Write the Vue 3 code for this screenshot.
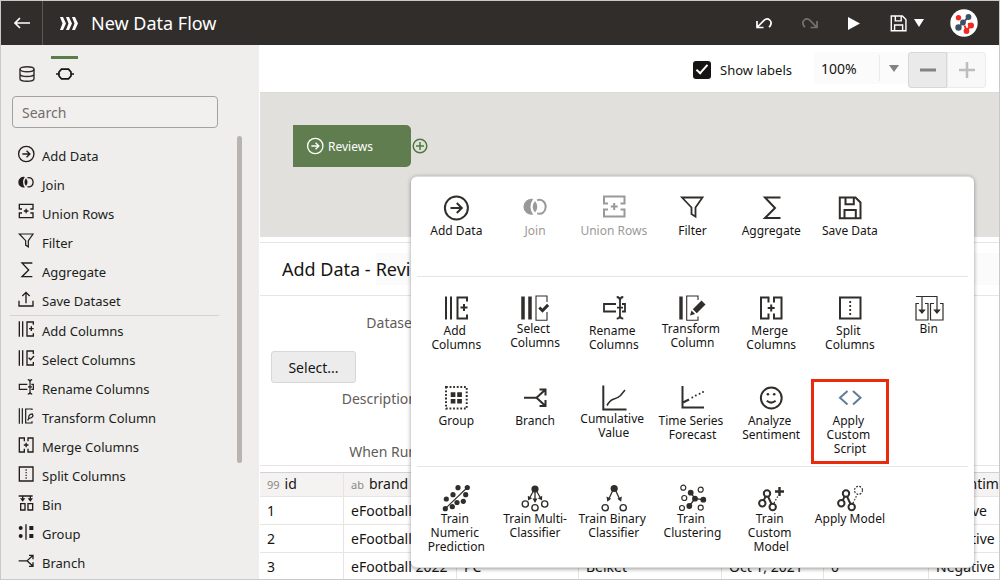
<script setup>
import { ref } from 'vue'

const search = ref('')
const showLabels = ref(true)
const stepName = ref('Reviews')

const trio = '<g fill="none" stroke="currentColor" stroke-width="2"><circle cx="8" cy="7.5" r="3.2"/><circle cx="3.3" cy="17.3" r="3.2"/><circle cx="13.7" cy="21" r="3.2"/><path d="M6.6 10.5 4.7 14.4M9.1 10.6l3.4 7.4"/></g>'
const line = (d, w = 2) => `<path fill="none" stroke="currentColor" stroke-width="${w}" d="${d}"/>`
const dots = (points, r) => points.map(([x, y]) => `<circle cx="${x}" cy="${y}" r="${r}" fill="currentColor"/>`).join('')
const rings = (points, r, w = 1.4) => points.map(([x, y]) => `<circle cx="${x}" cy="${y}" r="${r}" fill="none" stroke="currentColor" stroke-width="${w}"/>`).join('')

const icons = {
  add: rings([[12.4, 12]], 11.5, 2) + line('M6.5 12H17.5M12.8 7l5 5-5 5'),
  join: '<path fill="currentColor" d="M10.2 3A8 8 0 1 0 10.2 18.6Q4.8 10.8 10.2 3zM12 5Q16.6 10.8 12 16.6 7.4 10.8 12 5z"/>' + line('M14.2 4.200C19 2.800 22.700 6 22.700 10.800S19 18.800 14.200 17.400', 2),
  union: line('M6 7.5H2V.5h20.5v7h-4M6 13.5H2v7h20.5v-7h-4M12.2 7v7M8.7 10.5h7'),
  filter: line('M2 1.5h20.5L15.5 11.5v9.2l-4-2.6v-6.6z', 1.8),
  aggregate: line('M21.5 1.5H6L16 12 6 22h15.5'),
  save: line('M1.8 1.5h15.7l5 5v15.8H1.8zM7.5 2v6.3h8.3V2M6.5 22v-8h11.3v8'),
  addColumns: line('M2 .5v23M7 .5v23M23 5.5V1.5H13.5v21H23v-4M20 8v7M16.5 11.5h7'),
  selectColumns: line('M0 .5v23M7 .5v23', 3.5) + line('M24 6V0H13v24.3h11V16', 1.1) + line('M16.3 11.5l3.2 3.2 5.6-5.8', 3),
  rename: line('M14 8H2v7.5h12M20 8h3v7.5h-3M14.7 1q3.3.2 3.3 3.2v15.2q0 3-3.3 3.2M21.3 1Q18 1.2 18 4.2M18 19.4q0 3 3.3 3.2M15 11.7h6', 1.8),
  transform: line('M1 .5v23', 3.4) + line('M18 4V0H6.7V24.3H18V20.5', 1.1) + '<path fill="currentColor" d="M10 19.6l1.5-5 3.6 3.5zM12.8 13.3l8.7-8.8 4 4-8.7 8.8z"/>',
  merge: line('M9.5 6.5V1.5H2v21h7.5v-5M15 6.5V1.5h7.5v21H15v-5M12.2 8.5v7M8.7 12h7'),
  split: line('M2 1.5h20.5v21H2z') + '<path fill="none" stroke="currentColor" stroke-width="1.8" stroke-dasharray="2 2" d="M12.2 5v15"/>',
  bin: line('M-1 .5h21.5M5 .5v15M20 .5v15M2 7.5h-3v16.5h12V7.5H8M17 7.5h-3.5v16.5H26V7.5h-3', 1.2) + '<path fill="currentColor" d="M1.2 13.5h7.6L5 18zM16.2 13.5h7.6L20 18z"/>',
  group: '<rect x="2" y="1" width="20.7" height="21.5" fill="none" stroke="currentColor" stroke-width="2" stroke-dasharray="1.8 1.8"/><path fill="currentColor" d="M6.7 6.3h4.7v4.6H6.7zM13.2 6.3h4.7v4.6h-4.7zM6.7 12.9h4.7v4.6H6.7zM13.2 12.9h4.7v4.6h-4.7z"/>',
  branch: line('M1 11.8h12.5L22.5 3.5M13.5 11.8l9 8.2M16.5 3.5h6v6M16.5 20h6v-6'),
  cumulative: line('M1.3-.5V23.5H24.5') + line('M5 19.5Q8 14 12 13T18.5 9.5L23 4', 1.6),
  timeSeries: line('M2.5 0V21.6H24') + line('M3 16.5l6-3') + dots([[12.3, 11.5], [15.8, 9.6], [19.6, 7.8], [23, 6]], 1),
  sentiment: rings([[12.3, 12]], 10.4, 2) + dots([[8.9, 8.3], [15.2, 8.3]], 1.3) + line('M7.8 14.8q4.4 3.6 8.8 0'),
  code: line('M9.5 5 2 11.8l7.5 6.7M15 5l7.5 6.8-7.5 6.7'),
  numeric: dots([[14, 1.7], [23.3, 1.5], [9, 8.7], [21.7, 8.7], [2.3, 13], [13, 16.5], [19.3, 15.3], [1.3, 22.7], [8.3, 20.7]], 2.6) + line('M1.3 22.7 23.3 1.5', 1.1),
  multi: dots([[12, 3]], 3.6) + rings([[2.3, 18], [12, 21.7], [21.7, 18]], 3.1) + line('M10.5 5l-4 7M12 5v9M13.5 5l4 7', 1.3) + '<path fill="currentColor" d="M4.8 9.8l4.4 2.4L5 14.6zM9.5 12.5h5L12 17zM19.2 9.8l-4.4 2.4L19 14.6z"/>',
  binary: dots([[12.2, 2.5]], 3.6) + rings([[3.2, 21.7], [21.2, 21.7]], 3.1) + line('M11 4 6.8 13M13.4 4l4.2 9', 1.3) + '<path fill="currentColor" d="M4.5 10.5l4.6 2.2-3.8 3zM19.9 10.5l-4.6 2.2 3.8 3z"/>',
  clustering: rings([[3.3, 1.7], [20.7, 3.7], [4.3, 12], [2, 22], [20.7, 21.7]], 2.5, 1.2) + dots([[10.7, 6.7], [15, 12.7], [23.3, 13.7], [9.3, 20]], 2.9) + line('M10.7 6.7l4.3 6 8.3 1M15 12.7 9.3 20', 1.3),
  customModel: trio + line('M20.5 1v9M16 5.5h9', 2.4) + '<path fill="none" stroke="currentColor" stroke-width="1.2" stroke-dasharray="1.5 1.5" d="M15 17l4-7"/>',
  applyModel: trio + '<circle cx="20.5" cy="4.3" r="4" fill="none" stroke="currentColor" stroke-width="1.2" stroke-dasharray="1.8 1.4"/><path fill="none" stroke="currentColor" stroke-width="1.2" stroke-dasharray="1.5 1.5" d="M15 17l4-8"/>',
  upload: line('M1.5 14.5v8h21v-8M12 18.5V2M6.5 7.5 12 2l5.5 5.5'),
  selectSmall: line('M2 .5v23M7 .5v23M23 6V1.5H13.5v21H23V18M16 11.5l3 3 5-5.5'),
  transformSmall: line('M2 .5v23M6.5 .5v23M21 3V1.5H11.5v21H21V20M16 16l-1.5 2.5M16 15.5q-.5-4 2.5-6l3-.5 1 3q-2 4-6.5 3.5z', 1.8),
  binSmall: line('M1 1.5h21M7 1.5v6M18.5 1.5v6M4 13h6.5v9.5H4zM15 13h7v9.5h-7z') + '<path fill="currentColor" d="M3 5h8l-4 5zM14.5 5h8l-4 5z"/>',
  groupSmall: dots([[4, 6], [4, 18]], 3) + line('M12 .5v23') + '<path fill="currentColor" d="M17 3h6v6h-6zM17 15h6v6h-6z"/>'
}

const sidebarGroups = [
  [
    ['add', 'Add Data'], ['join', 'Join'], ['union', 'Union Rows'],
    ['filter', 'Filter'], ['aggregate', 'Aggregate'], ['upload', 'Save Dataset']
  ],
  [
    ['addColumns', 'Add Columns'], ['selectSmall', 'Select Columns'], ['rename', 'Rename Columns'],
    ['transformSmall', 'Transform Column'], ['merge', 'Merge Columns'], ['split', 'Split Columns'],
    ['binSmall', 'Bin'], ['groupSmall', 'Group'], ['branch', 'Branch']
  ]
]

const menuSections = [
  [
    { icon: 'add', label: 'Add Data' },
    { icon: 'join', label: 'Join', disabled: true },
    { icon: 'union', label: 'Union Rows', disabled: true },
    { icon: 'filter', label: 'Filter' },
    { icon: 'aggregate', label: 'Aggregate' },
    { icon: 'save', label: 'Save Data' }
  ],
  [
    { icon: 'addColumns', label: 'Add \nColumns' },
    { icon: 'selectColumns', label: 'Select \nColumns', tight: true },
    { icon: 'rename', label: 'Rename \nColumns' },
    { icon: 'transform', label: 'Transform \nColumn', tight: true },
    { icon: 'merge', label: 'Merge \nColumns' },
    { icon: 'split', label: 'Split \nColumns' },
    { icon: 'bin', label: 'Bin', tight: true },
    { icon: 'group', label: 'Group' },
    { icon: 'branch', label: 'Branch' },
    { icon: 'cumulative', label: 'Cumulative \nValue', tight: true },
    { icon: 'timeSeries', label: 'Time Series \nForecast' },
    { icon: 'sentiment', label: 'Analyze \nSentiment' },
    { icon: 'code', label: 'Apply \nCustom \nScript', marked: true }
  ],
  [
    { icon: 'numeric', label: 'Train \nNumeric \nPrediction', tight: true },
    { icon: 'multi', label: 'Train Multi-\nClassifier', tight: true },
    { icon: 'binary', label: 'Train Binary \nClassifier', tight: true },
    { icon: 'clustering', label: 'Train \nClustering', tight: true },
    { icon: 'customModel', label: 'Train \nCustom \nModel', tight: true },
    { icon: 'applyModel', label: 'Apply Model', tight: true }
  ]
]

const columns = [
  { type: '99', name: 'id' },
  { type: 'ab', name: 'brand' },
  { type: '', name: '' },
  { type: '', name: '' },
  { type: '', name: '' },
  { type: '', name: '' },
  { type: 'ab', name: 'sentiment' }
]
const rows = [
  ['1', 'eFootball 2022', 'PC', 'Belket', 'Oct 1, 2021', '0', 'Positive'],
  ['2', 'eFootball 2022', 'PC', 'Belket', 'Oct 1, 2021', '0', 'Negative'],
  ['3', 'eFootball 2022', 'PC', 'Belket', 'Oct 1, 2021', '0', 'Negative']
]
</script>

<template>
  <div class="app">
    <header class="topbar">
      <button class="back" aria-label="Back">
        <svg width="16" height="12" viewBox="0 0 16 12"><path d="M16 6H1M6 1 1 6l5 5" fill="none" stroke="currentColor" stroke-width="1.7" /></svg>
      </button>
      <svg class="flow-mark" width="18" height="13" viewBox="0 0 18 13" fill="currentColor">
        <path d="M0 0h3l3 6.500-3 6.500H0l2.500-6.500zM6 0h3l3 6.500-3 6.500H6l2.500-6.500zM12 0h3l3 6.500-3 6.500H12l2.500-6.500z" />
      </svg>
      <h1>New Data Flow</h1>
      <div class="actions">
        <button aria-label="Undo">
          <svg width="16" height="12" viewBox="0 0 16 12"><path d="M1 4v6.500h6.500M1.500 10 8 3.300Q11 .5 13.700 3t.3 6.200l-1 1" fill="none" stroke="currentColor" stroke-width="1.700" /></svg>
        </button>
        <button aria-label="Redo" class="faded">
          <svg width="16" height="12" viewBox="0 0 16 12"><path d="M15 4v6.500H8.500M14.500 10 8 3.300Q5 .5 2.300 3T2 9.200l1 1" fill="none" stroke="currentColor" stroke-width="1.700" /></svg>
        </button>
        <button aria-label="Run">
          <svg width="12" height="13" viewBox="0 0 12 13"><path d="M0 0l12 6.500L0 13z" fill="currentColor" /></svg>
        </button>
        <button aria-label="Save" class="save">
          <svg width="17" height="17" viewBox="0 0 24 24" v-html="icons.save"></svg>
          <svg width="10" height="8" viewBox="0 0 10 8"><path d="M0 0h10L5 8z" fill="currentColor" /></svg>
        </button>
        <svg class="brand" width="28" height="28" viewBox="0 0 28 28">
          <circle cx="14" cy="14" r="13.700" fill="#fff" />
          <path d="M8.500 18.500 13 13.500 18.500 8M8.500 18.500" fill="none" stroke="#3b5264" stroke-width="1.800" />
          <path d="M14.500 16.500 16.500 21.500l4.500-5-3-2" fill="none" stroke="#f5281f" stroke-width="2" />
          <g fill="#3b5264"><circle cx="18.500" cy="8" r="2.900" /><circle cx="13" cy="13.500" r="2.900" /><circle cx="8.500" cy="18.500" r="3.200" /></g>
          <g fill="#f5281f"><circle cx="8.500" cy="8.800" r="2.700" /><circle cx="21" cy="16.500" r="3" /><circle cx="16.500" cy="22" r="2.900" /></g>
        </svg>
      </div>
    </header>

    <div class="body">
      <aside class="sidebar">
        <div class="tabs">
          <button class="tab" aria-label="Data">
            <svg width="16" height="16" viewBox="0 0 16 16" fill="none" stroke="currentColor" stroke-width="1.400"><ellipse cx="8" cy="3.300" rx="7" ry="2.500" /><path d="M1 3.300v9.400c0 1.400 3.100 2.500 7 2.500s7-1.100 7-2.500V3.300M1 8C1 9.400 4.100 10.500 8 10.500S15 9.400 15 8" /></svg>
          </button>
          <button class="tab active" aria-label="Steps">
            <svg width="18" height="12" viewBox="0 0 18 12" fill="none" stroke="currentColor" stroke-width="1.700"><path d="M5.500 1.200h7L15 4v4l-2.500 2.800h-7L3 8V4zM0 6h3M15 6h3" /></svg>
          </button>
        </div>
        <input v-model="search" class="search" type="text" placeholder="Search" aria-label="Search" />
        <div class="steps">
          <div class="step-list">
            <ul v-for="(group, g) in sidebarGroups" :key="g">
              <li v-for="[icon, label] in group" :key="label">
                <button>
                  <svg width="16" height="16" viewBox="0 0 24 24" v-html="icons[icon]"></svg>
                  <span>{{ label }}</span>
                </button>
              </li>
            </ul>
          </div>
          <div class="thumb"></div>
        </div>
      </aside>

      <main>
        <div class="toolbar">
          <label class="check">
            <input v-model="showLabels" type="checkbox" />
            <span>Show labels</span>
          </label>
          <div class="zoom">
            <select aria-label="Zoom level"><option>100%</option></select>
            <svg width="10" height="7" viewBox="0 0 10 7"><path d="M0 0h10L5 7z" fill="#85817d" /></svg>
          </div>
          <button class="scale" aria-label="Zoom out">
            <svg width="16" height="16" viewBox="0 0 16 16"><path d="M0 8h16" stroke="currentColor" stroke-width="3" /></svg>
          </button>
          <button class="scale light" aria-label="Zoom in">
            <svg width="16" height="16" viewBox="0 0 16 16"><path d="M0 8h16M8 0v16" stroke="currentColor" stroke-width="2.500" /></svg>
          </button>
        </div>

        <section class="canvas">
          <button class="node">
            <svg width="16" height="16" viewBox="0 0 24 24" v-html="icons.add"></svg>
            Reviews
          </button>
          <button class="node-add" aria-label="Add step">
            <svg width="16" height="16" viewBox="0 0 16 16" fill="none" stroke="currentColor" stroke-width="1.500"><circle cx="8" cy="8" r="6.800" /><path d="M8 4v8M4 8h8" /></svg>
          </button>

          <div class="menu">
            <div v-for="(section, s) in menuSections" :key="s" class="menu-section">
              <button
                v-for="item in section"
                :key="item.label"
                class="menu-item"
                :class="{ tight: item.tight, marked: item.marked }"
                :disabled="item.disabled"
              >
                <svg width="24" height="24" viewBox="0 0 24 24" v-html="icons[item.icon]"></svg>
                <span>{{ item.label }}</span>
              </button>
            </div>
          </div>
        </section>

        <section class="detail">
          <div class="detail-title">
            <label for="step-name">Add Data -</label>
            <input id="step-name" v-model="stepName" type="text" />
          </div>
          <div class="form">
            <span class="field">Dataset</span>
            <button class="select">Select...</button>
            <span class="field">Description</span>
            <span class="field last">When Run</span>
          </div>
        </section>

        <table>
          <colgroup>
            <col class="c-id" /><col class="c-brand" /><col class="c-platform" /><col class="c-author" />
            <col class="c-date" /><col class="c-count" /><col />
          </colgroup>
          <thead>
            <tr>
              <th v-for="(column, c) in columns" :key="c"><small>{{ column.type }}</small>{{ column.name }}</th>
            </tr>
          </thead>
          <tbody>
            <tr v-for="row in rows" :key="row[0]">
              <td v-for="(cell, c) in row" :key="c">{{ cell }}</td>
            </tr>
          </tbody>
        </table>
      </main>
    </div>
  </div>
</template>

<style>
body {
  background: #fff;
}
</style>

<style scoped>
.app {
  box-sizing: border-box;
  height: 100vh;
  display: flex;
  flex-direction: column;
  overflow: hidden;
  border: 1px solid #c8c9c8;
  font-family: "Noto Sans", "Open Sans", sans-serif;
  font-size: 14px;
  color: #161513;
}
.app *, .app *::before, .app *::after {
  box-sizing: border-box;
}
button, input, select {
  font: inherit;
  color: inherit;
  border: 0;
  padding: 0;
  margin: 0;
  background: none;
}
svg {
  display: block;
  flex: none;
  overflow: visible;
}

.topbar {
  flex: none;
  height: 44px;
  display: flex;
  align-items: center;
  background: #312d2a;
  color: #fff;
}
.back {
  width: 42px;
  height: 100%;
  display: grid;
  place-items: center;
  border-right: 1px solid #5c5855;
}
.flow-mark {
  margin: 0 13px 0 17px;
}
h1 {
  margin: 0;
  font-size: 18px;
  font-weight: 400;
  line-height: 24px;
}
.actions {
  margin-left: auto;
  margin-right: 21px;
  display: flex;
  align-items: center;
}
.actions button {
  margin-right: 30px;
}
.actions .faded {
  color: #76726f;
}
.actions .save {
  display: flex;
  align-items: center;
  gap: 7px;
  margin-right: 26px;
}

.body {
  flex: 1;
  min-height: 0;
  display: flex;
}
.sidebar {
  width: 258px;
  flex: none;
  background: #efeeec;
  color: #312d2a;
}
.tabs {
  display: flex;
  gap: 11px;
  padding: 11px 0 0 12px;
}
.tab {
  width: 27px;
  height: 32px;
  display: grid;
  place-items: center;
  border-top: 3px solid transparent;
}
.tab.active {
  border-color: #5a7d4a;
  color: #161513;
}
.search {
  display: block;
  width: 206px;
  height: 32px;
  margin: 8px 0 0 11px;
  padding: 0 9px;
  border: 1px solid #a5a19e;
  border-radius: 4px;
  background: #f1f0ee;
}
.search::placeholder {
  color: #716d6a;
  opacity: 1;
}
.steps {
  display: flex;
  padding: 8px 17px 0 9px;
  justify-content: space-between;
}
.step-list {
  width: 209px;
  padding-top: 5px;
}
ul {
  list-style: none;
  margin: 0;
  padding: 0;
}
ul + ul {
  border-top: 1px solid #d5d3d0;
}
li button {
  height: 29px;
  width: 100%;
  display: flex;
  align-items: center;
  gap: 8px;
  padding-left: 8px;
  font-size: 13px;
  color: #201d1a;
}
li svg {
  margin-bottom: 3px;
}
li span {
  line-height: 20px;
}
.thumb {
  width: 5px;
  height: 327px;
  border-radius: 3px;
  background: #bab4b0;
}

main {
  flex: 1;
  min-width: 0;
  padding-left: 1px;
  background: #fff;
}
.toolbar {
  height: 48px;
  display: flex;
  align-items: center;
  justify-content: flex-end;
  padding: 2px 13px 0 0;
  border-bottom: 1px solid #dcdbd8;
}
.check {
  display: flex;
  align-items: center;
  gap: 9px;
  margin-right: 22px;
  font-size: 13px;
}
.check input {
  appearance: none;
  width: 18px;
  height: 18px;
  border-radius: 3px;
  background: #161513;
  display: grid;
  place-items: center;
}
.check input:checked::before {
  content: "";
  width: 6px;
  height: 12px;
  margin-bottom: 3px;
  border: solid #fff;
  border-width: 0 2px 2px 0;
  transform: rotate(42deg);
}
.zoom {
  display: flex;
  align-items: center;
  gap: 9px;
  height: 32px;
  padding-right: 9px;
  margin-bottom: 3px;
  background: #fbfbfb;
}
.zoom select {
  appearance: none;
  width: 66px;
  height: 26px;
  padding-left: 7px;
  border-right: 1px solid #ecebea;
}
.scale {
  width: 39px;
  height: 36px;
  display: grid;
  place-items: center;
  border: 1px solid #d8d7d5;
  border-radius: 3px 0 0 3px;
  background: #ebeaea;
  color: #85827f;
}
.scale.light {
  border-color: #ecebeb;
  border-radius: 0 3px 3px 0;
  background: #f8f8f8;
  color: #bfbdbb;
}

.canvas {
  position: relative;
  height: 144px;
  background: #e1e0dc;
}
.node {
  position: absolute;
  left: 33px;
  top: 32px;
  width: 118px;
  height: 42px;
  display: flex;
  align-items: center;
  gap: 5px;
  padding-left: 14px;
  border-radius: 0 5px 5px 0;
  background: #5f7d4f;
  color: #fff;
  font-size: 12px;
}
.node-add {
  position: absolute;
  left: 152px;
  top: 45px;
  color: #4d7a3c;
}
.menu {
  position: absolute;
  left: 151px;
  right: 25px;
  top: 83px;
  z-index: 2;
  padding: 0 6px 1px;
  border: 1px solid #dddcd9;
  border-width: 1px 0;
  border-radius: 6px;
  background: #fff;
  box-shadow: 0 1px 4px rgba(0, 0, 0, 0.4);
}
.menu-section {
  display: grid;
  grid-template-columns: repeat(7, 1fr);
  grid-auto-rows: 80px;
  row-gap: 10px;
  padding-top: 19px;
}
.menu-section + .menu-section {
  border-top: 1px solid #e6e5e3;
}
.menu-item {
  position: relative;
  display: flex;
  flex-direction: column;
  align-items: center;
  gap: 4px;
  font-size: 12px;
  line-height: 14px;
}
.menu-item svg {
  color: #312d2a;
}
.menu-item span {
  white-space: pre;
  text-align: center;
}
.menu-item.tight {
  gap: 2px;
}
.menu-item:disabled,
.menu-item:disabled svg {
  color: #9b9997;
}
.menu-item.marked svg {
  color: #5f7d95;
}
.menu-item.marked::after {
  content: "";
  position: absolute;
  inset: -7px 0 2px;
  border: 3px solid #ea2a0c;
}

.detail {
  margin-top: 5px;
  border: solid #e6e5e3;
  border-width: 1px 0;
}
.detail-title {
  display: flex;
  align-items: center;
  gap: 5px;
  height: 53px;
  padding-left: 22px;
  border-bottom: 1px solid #e6e5e3;
  font-size: 18px;
}
.detail-title input {
  flex: 1;
  min-width: 0;
  height: 32px;
  background: #fbfbfb;
}
.form {
  display: flex;
  flex-direction: column;
  padding: 17px 0 3px;
  color: #5f5c59;
}
.field {
  width: 157px;
  text-align: right;
  line-height: 20px;
  margin-bottom: 18px;
}
.select {
  width: 85px;
  height: 32px;
  margin: 0 0 6px 11px;
  border: 1px solid #d8d7d5;
  border-radius: 3px;
  background: #ececec;
  color: #161513;
}
.select + .field {
  margin-bottom: 33px;
}
.field.last {
  margin-bottom: 0;
}

table {
  width: 100%;
  margin-top: 6px;
  border-collapse: separate;
  border-spacing: 0;
  table-layout: fixed;
  border-top: 1px solid #cfd3d8;
}
.c-id { width: 84px; }
.c-brand { width: 113px; }
.c-platform { width: 122px; }
.c-author { width: 143px; }
.c-date { width: 102px; }
.c-count { width: 105px; }
th, td {
  height: 28px;
  padding: 0 7px;
  border-right: 1px solid #e6e5e3;
  border-bottom: 1px solid #e6e5e3;
  text-align: left;
  font-weight: 400;
  line-height: 20px;
  white-space: nowrap;
  overflow: hidden;
}
th {
  height: 24px;
  background: #f4f3f1;
}
th:last-child, td:last-child {
  padding-right: 0;
  border-right: 0;
}
small {
  margin-right: 5px;
  font-size: 11px;
  color: #8b8885;
}
</style>
